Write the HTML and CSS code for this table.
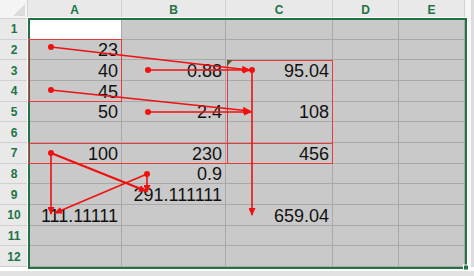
FILE: index.html
```html
<!DOCTYPE html>
<html>
<head>
<meta charset="utf-8">
<link rel="stylesheet" href="styles.css">
</head>
<body>
<div class="wrap">
  <div class="sheet">
    <div class="corner"><span class="tri"></span></div>
    <div class="ch">A</div><div class="ch">B</div><div class="ch">C</div><div class="ch">D</div><div class="ch">E</div><div class="edge hd"></div>

    <div class="rh">1</div><div class="c active"></div><div class="c"></div><div class="c"></div><div class="c"></div><div class="c"></div><div class="edge"></div>
    <div class="rh">2</div><div class="c">23</div><div class="c"></div><div class="c"></div><div class="c"></div><div class="c"></div><div class="edge"></div>
    <div class="rh">3</div><div class="c">40</div><div class="c">0.88</div><div class="c">95.04</div><div class="c"></div><div class="c"></div><div class="edge"></div>
    <div class="rh">4</div><div class="c">45</div><div class="c"></div><div class="c"></div><div class="c"></div><div class="c"></div><div class="edge"></div>
    <div class="rh">5</div><div class="c">50</div><div class="c">2.4</div><div class="c">108</div><div class="c"></div><div class="c"></div><div class="edge"></div>
    <div class="rh">6</div><div class="c"></div><div class="c"></div><div class="c"></div><div class="c"></div><div class="c"></div><div class="edge"></div>
    <div class="rh">7</div><div class="c">100</div><div class="c">230</div><div class="c">456</div><div class="c"></div><div class="c"></div><div class="edge"></div>
    <div class="rh">8</div><div class="c"></div><div class="c">0.9</div><div class="c"></div><div class="c"></div><div class="c"></div><div class="edge"></div>
    <div class="rh">9</div><div class="c"></div><div class="c">291.111111</div><div class="c"></div><div class="c"></div><div class="c"></div><div class="edge"></div>
    <div class="rh">10</div><div class="c">111.11111</div><div class="c"></div><div class="c">659.04</div><div class="c"></div><div class="c"></div><div class="edge"></div>
    <div class="rh">11</div><div class="c"></div><div class="c"></div><div class="c"></div><div class="c"></div><div class="c"></div><div class="edge"></div>
    <div class="rh">12</div><div class="c"></div><div class="c"></div><div class="c"></div><div class="c"></div><div class="c"></div><div class="edge"></div>

    <div class="foot"></div>
  </div>

  <svg class="overlay" width="474" height="276" viewBox="0 0 474 276">
    <defs>
      <marker id="ah" markerUnits="userSpaceOnUse" markerWidth="8" markerHeight="7" refX="7" refY="3.5" orient="auto">
        <path d="M0,0 L8,3.5 L0,7 z" fill="#f01010"/>
      </marker>
    </defs>
    <!-- selection -->
    <rect x="27.5" y="17.5" width="440" height="252" fill="none" stroke="#ffffff" stroke-width="1"/>
    <rect x="29" y="19" width="437" height="249" fill="none" stroke="#217346" stroke-width="2"/>
    <rect x="463.5" y="265" width="5" height="5" fill="#217346" stroke="#ffffff" stroke-width="1"/>
    <!-- precedent boxes -->
    <g fill="none" stroke="#e83a3a" stroke-width="1">
      <rect x="28.5" y="39.5" width="93" height="62"/>
      <rect x="227.5" y="60.5" width="105" height="103"/>
      <rect x="28.5" y="143.5" width="304" height="20"/>
    </g>
    <!-- error triangle -->
    <path d="M227,60 L233,60 L227,66 z" fill="#5a5a2a"/>
    <!-- arrows -->
    <g stroke="#f01010" stroke-width="1.6" fill="none">
      <line x1="51" y1="47" x2="249" y2="70" marker-end="url(#ah)"/>
      <line x1="148" y1="70" x2="250" y2="70" marker-end="url(#ah)"/>
      <line x1="51" y1="90" x2="250" y2="111" marker-end="url(#ah)"/>
      <line x1="148" y1="112" x2="251" y2="112" marker-end="url(#ah)"/>
      <line x1="252" y1="70" x2="252" y2="215" marker-end="url(#ah)"/>
      <line x1="51" y1="153" x2="146" y2="191" stroke-width="2.4" marker-end="url(#ah)"/>
      <line x1="51" y1="153" x2="51" y2="214" marker-end="url(#ah)"/>
      <line x1="147" y1="174" x2="147" y2="192" marker-end="url(#ah)"/>
      <line x1="147" y1="174" x2="55" y2="213" marker-end="url(#ah)"/>
    </g>
    <g fill="#f01010">
      <circle cx="51" cy="47" r="3"/>
      <circle cx="148" cy="70" r="3"/>
      <circle cx="51" cy="90" r="3"/>
      <circle cx="148" cy="112" r="3"/>
      <circle cx="252" cy="70" r="3"/>
      <circle cx="51" cy="153" r="3"/>
      <circle cx="147" cy="174" r="3"/>
    </g>
  </svg>
</div>
</body>
</html>
```

FILE: styles.css
```css
html, body {
  margin: 0;
  padding: 0;
  background: #ffffff;
}

.wrap {
  position: relative;
  width: 474px;
  height: 276px;
  overflow: hidden;
}

.sheet {
  display: grid;
  grid-template-columns: 28px 94px 104px 107px 66px 66px 9px;
  grid-template-rows: 19px repeat(12, 20.667px) 9px;
  width: 474px;
  height: 276px;
  font-family: "Liberation Sans", Arial, sans-serif;
}

.corner {
  position: relative;
  background: #f4f4f4;
  border-right: 1px solid #d4d4d4;
  border-bottom: 1px solid #d4d4d4;
}

.tri {
  position: absolute;
  right: 2px;
  bottom: 2px;
  width: 0;
  height: 0;
  border-left: 12px solid transparent;
  border-bottom: 12px solid #dcdcdc;
}

.ch {
  box-sizing: border-box;
  background: #e9e9e9;
  border-right: 1px solid #d0d0d0;
  color: #217346;
  font-weight: bold;
  font-size: 12px;
  display: flex;
  align-items: center;
  justify-content: center;
  padding-top: 1px;
}

.rh {
  box-sizing: border-box;
  background: #e9e9e9;
  border-bottom: 1px solid #d0d0d0;
  color: #217346;
  font-weight: bold;
  font-size: 12px;
  display: flex;
  align-items: center;
  justify-content: center;
  padding-top: 1px;
}

.c {
  box-sizing: border-box;
  background: #c9c9c9;
  border-right: 1px solid #a9a9a9;
  border-bottom: 1px solid #a9a9a9;
  display: flex;
  justify-content: flex-end;
  align-items: flex-end;
  padding: 0 3px 0 0;
  font-size: 18px;
  line-height: 1;
  color: #111111;
  white-space: nowrap;
  min-width: 0;
}

.c.active {
  background: #ffffff;
}

.edge {
  background: #f6f6f6;
  border-right: 3px solid #dcdcdc;
}

.edge.hd {
  background: #f6f6f6;
}

.foot {
  grid-column: 1 / -1;
  background: #ffffff;
  box-shadow: inset 0 -5px 0 #e2e2e2;
}

.overlay {
  position: absolute;
  left: 0;
  top: 0;
  pointer-events: none;
}
```
